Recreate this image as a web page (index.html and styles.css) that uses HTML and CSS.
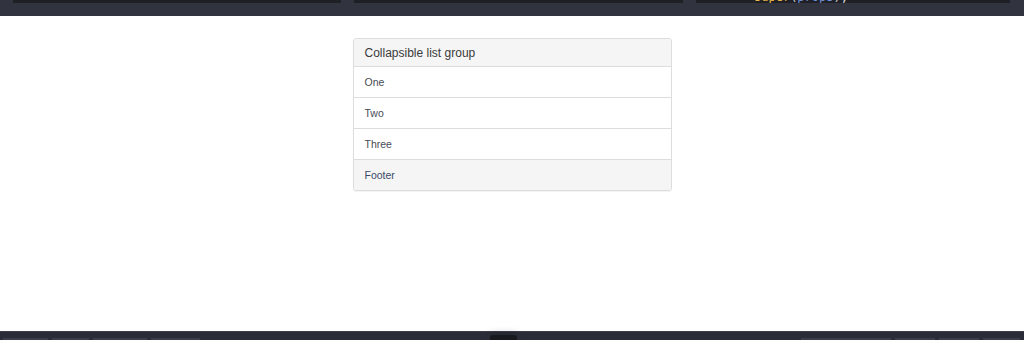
FILE: index.html
```html
<!DOCTYPE html>
<html lang="en">
<head>
    <meta charset="UTF-8">
    <title>Collapsible list group</title>
    <link rel="stylesheet" href="styles.css">
</head>
<body>
    <!-- editor strip at the top -->
    <div class="top-bar">
        <div class="pane pane-a"></div>
        <div class="pane pane-b"></div>
        <div class="pane pane-c"><span class="code"><b>super</b>(<i>props</i>);</span></div>
    </div>

    <div class="main">
        <div class="panel">
            <div class="panel-heading">Collapsible list group</div>
            <ul class="list-group">
                <li class="list-item">One</li>
                <li class="list-item">Two</li>
                <li class="list-item">Three</li>
            </ul>
            <div class="panel-footer">Footer</div>
        </div>
    </div>

    <!-- taskbar at the bottom -->
    <div class="bottom-bar">
        <div class="tabs">
            <span class="tab t1"></span>
            <span class="tab t2"></span>
            <span class="tab t3"></span>
            <span class="tab t4"></span>
        </div>
        <span class="center-tab"></span>
        <div class="tabs">
            <span class="tab t5"></span>
            <span class="tab t6"></span>
            <span class="tab t7"></span>
            <span class="tab t8"></span>
        </div>
    </div>
</body>
</html>
```
FILE: styles.css
```css
html,
body {
    height: 100%;
}

body {
    margin: 0;
    display: flex;
    flex-direction: column;
    font-family: "Liberation Sans", Arial, sans-serif;
    background: #fff;
}

.top-bar {
    height: 16px;
    flex: none;
    display: flex;
    gap: 13px;
    padding: 0 14px 0 13px;
    background: #31333f;
    box-sizing: border-box;
}

.pane {
    height: 3px;
    background: #1f2026;
    overflow: hidden;
}

.pane-a {
    width: 328px;
}

.pane-b {
    width: 329px;
}

.pane-c {
    flex: 1;
}

.code {
    display: block;
    margin: -9px 0 0 58px;
    font: 12px/12px "DejaVu Sans Mono", monospace;
    color: #d6d6d6;
}

.code b {
    font-weight: normal;
    color: #e8b84a;
}

.code i {
    font-style: normal;
    color: #6f8fd8;
}

.main {
    flex: 1;
    padding-top: 22px;
}

.panel {
    width: 319px;
    margin: 0 auto;
    border: 1px solid #ddd;
    border-radius: 3px;
    box-shadow: 0 1px 1px rgba(0, 0, 0, 0.05);
    box-sizing: border-box;
    overflow: hidden;
}

.panel-heading {
    padding: 7px 11px 7px 11px;
    height: 28px;
    box-sizing: border-box;
    line-height: 14px;
    font-size: 12px;
    color: #3a3a3a;
    background: #f5f5f5;
    border-bottom: 1px solid #ddd;
}

.list-group {
    list-style: none;
    margin: 0;
    padding: 0;
}

.list-item {
    height: 31px;
    padding: 0 11px;
    line-height: 30px;
    box-sizing: border-box;
    font-size: 10.5px;
    color: #474b54;
    border-bottom: 1px solid #ddd;
}

.panel-footer {
    height: 30px;
    padding: 0 11px;
    line-height: 30px;
    box-sizing: border-box;
    font-size: 10.5px;
    color: #3b4b66;
    background: #f5f5f5;
}

.bottom-bar {
    height: 9px;
    flex: none;
    display: flex;
    justify-content: space-between;
    align-items: flex-end;
    padding: 0 4px 0 3px;
    background: #2a2c37;
    border-top: 1px solid #3a3c47;
    box-sizing: border-box;
}

.tabs {
    display: flex;
    gap: 4px;
}

.tab {
    height: 2px;
    background: #3b3d49;
}

.t1 { width: 45px; }
.t2 { width: 37px; }
.t3 { width: 54px; }
.t4 { width: 49px; }
.t5 { width: 90px; }
.t6 { width: 40px; }
.t7 { width: 40px; }
.t8 { width: 37px; }

.center-tab {
    width: 27px;
    height: 5px;
    margin-left: 5px;
    background: #18191e;
    border-radius: 3px 3px 0 0;
    box-shadow: 0 -3px 6px rgba(0, 0, 0, 0.15);
}
```
